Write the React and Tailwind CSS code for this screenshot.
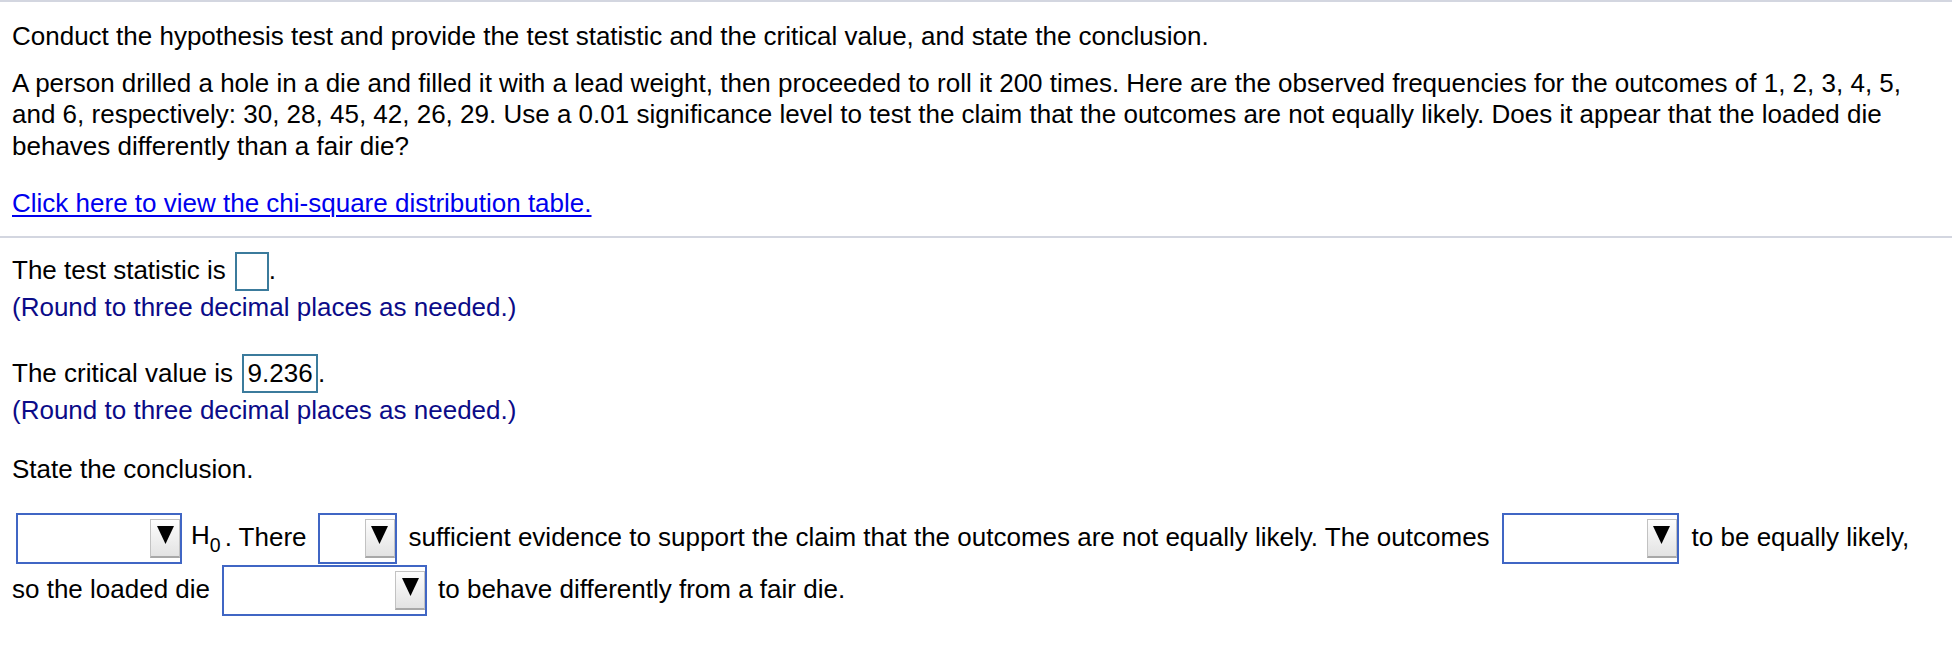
import React from "react";

function Dropdown({ width, className = "" }) {
  return (
    <div
      className={`flex h-[51px] shrink-0 items-start justify-end border-2 border-[#4066c4] bg-white pt-[4px] ${className}`}
      style={{ width }}
    >
      <div className="flex h-[39px] w-[30px] justify-center border border-[#c2c2c2] border-b-2 border-b-[#a8a8a8] bg-linear-to-b from-[#fdfdfd] to-[#e3e3e3] pt-[6px]">
        <svg width="17" height="18" viewBox="0 0 17 18">
          <polygon points="0,0 17,0 8.5,18" fill="#000" />
        </svg>
      </div>
    </div>
  );
}

function AnswerBox({ children, className = "" }) {
  return (
    <div
      className={`flex h-[39px] shrink-0 items-center justify-center border-2 border-[#3b7b9c] bg-white ${className}`}
    >
      {children}
    </div>
  );
}

export default function App() {
  return (
    <div
      className="min-h-[666px] w-[1952px] border-t-2 border-[#d3d6e0] bg-white text-[26px] leading-[31.5px] text-black"
      style={{ fontFamily: '"Liberation Sans", Arial, Helvetica, sans-serif' }}
    >
      <div className="px-[12px] pt-[19px]">
        <p className="whitespace-nowrap">
          Conduct the hypothesis test and provide the test statistic and the critical value, and state the conclusion.
        </p>
        <p className="mt-[15px] whitespace-nowrap">
          A person drilled a hole in a die and filled it with a lead weight, then proceeded to roll it 200 times. Here are the observed frequencies for the outcomes of 1, 2, 3, 4, 5,
          <br />
          and 6, respectively: 30, 28, 45, 42, 26, 29. Use a 0.01 significance level to test the claim that the outcomes are not equally likely. Does it appear that the loaded die
          <br />
          behaves differently than a fair die?
        </p>
        <p className="mt-[26px]">
          <a href="#" className="text-[#0000ee] underline decoration-[1.5px] underline-offset-[3px]">
            Click here to view the chi-square distribution table.
          </a>
        </p>
      </div>

      <div className="mt-[16px] h-[2px] bg-[#d3d6e0]" />

      <div className="px-[12px]">
        <div className="mt-[14px] flex h-[39px] items-center whitespace-nowrap">
          <span>The test statistic is</span>
          <AnswerBox className="ml-[9px] w-[34px]" />
          <span>.</span>
        </div>
        <p className="mt-[1.5px] text-[#0b0b88]">(Round to three decimal places as needed.)</p>

        <div className="mt-[30.5px] flex h-[39px] items-center whitespace-nowrap">
          <span>The critical value is</span>
          <AnswerBox className="ml-[9px] w-[76px]">9.236</AnswerBox>
          <span>.</span>
        </div>
        <p className="mt-[1.5px] text-[#0b0b88]">(Round to three decimal places as needed.)</p>

        <p className="mt-[28px]">State the conclusion.</p>

        <div className="mt-[27px] flex h-[51px] items-center whitespace-nowrap">
          <Dropdown width={166} className="ml-[4px]" />
          <span className="ml-[9px]">
            H<span className="align-[-8px] text-[19.5px] leading-none">0</span>
          </span>
          <span className="ml-[4px]">. There</span>
          <Dropdown width={79} className="ml-[11px]" />
          <span className="ml-[12px]">
            sufficient evidence to support the claim that the outcomes are not equally likely. The outcomes
          </span>
          <Dropdown width={177} className="ml-[12px]" />
          <span className="ml-[13px]">to be equally likely,</span>
        </div>

        <div className="mt-[1px] flex h-[51px] items-center whitespace-nowrap">
          <span>so the loaded die</span>
          <Dropdown width={205} className="ml-[12px]" />
          <span className="ml-[11px]">to behave differently from a fair die.</span>
        </div>
      </div>
    </div>
  );
}
